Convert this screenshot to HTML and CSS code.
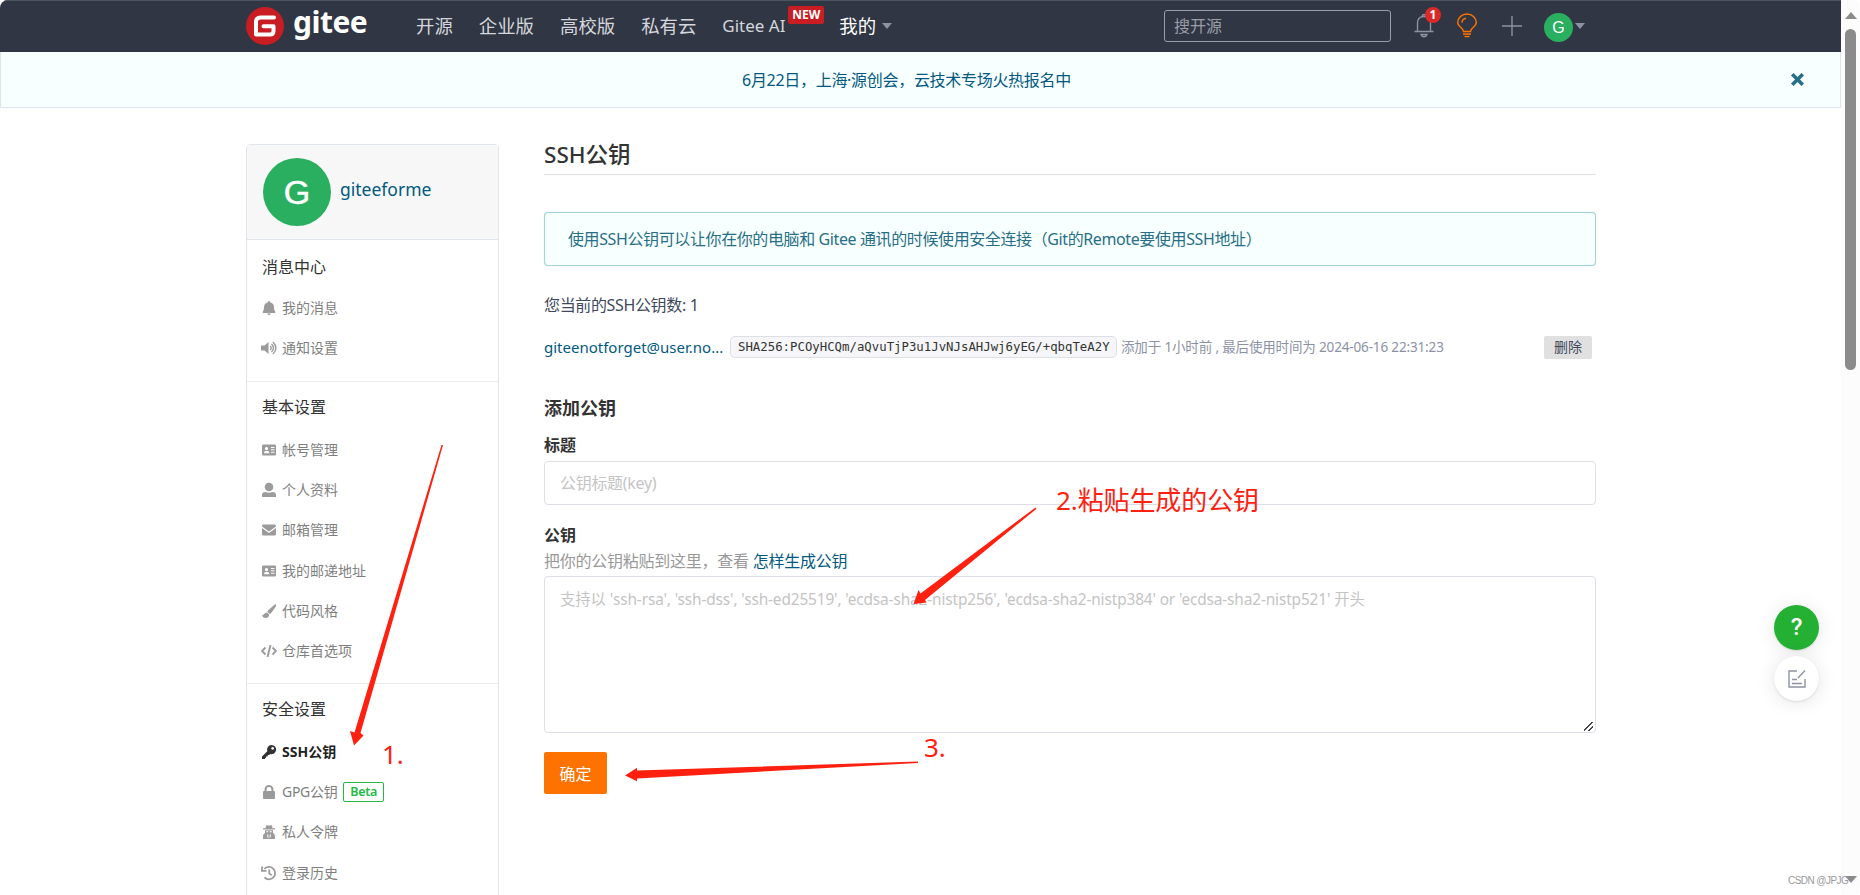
FILE: index.html
```html
<!DOCTYPE html>
<html lang="zh-CN">
<head>
  <meta charset="UTF-8" />
  <title>SSH公钥 - Gitee.com</title>
  <link rel="stylesheet" href="styles.css">
</head>
<body>
  <svg class="sprite" width="0" height="0">
    <symbol id="i-card" viewBox="0 0 16 14"><path fill-rule="evenodd" d="M2.300 1.500h11.400Q15 1.500 15 2.800v8.400Q15 12.500 13.700 12.500H2.300Q1 12.500 1 11.200V2.800Q1 1.500 2.300 1.500zM5.500 4a1.600 1.600 0 1 0 .01 0zM3 10.300h5.400Q8.400 8 6.600 8H4.800Q3 8 3 10.300zM10 4v1h3.500V4zM10 6.300v1h3.500v-1zM10 8.700v1h3.500v-1z"/></symbol>
  </svg>

  <header class="navbar">
    <div class="navbar-inner">
      <a class="logo">
        <svg width="38" height="38" viewBox="0 0 38 38"><circle cx="19" cy="19" r="19" fill="#c71d23"/><path d="M28 10.500H14.500Q10 10.500 10 15v12.500h14Q27.500 27.500 27.500 24v-4.700H17.500" fill="none" stroke="#fff" stroke-width="4" stroke-linejoin="round" stroke-linecap="round"/></svg>
        <span class="logo-text">gitee</span>
      </a>
      <nav class="menu">
        <a>开源</a>
        <a>企业版</a>
        <a>高校版</a>
        <a>私有云</a>
        <a class="menu-ai">Gitee AI<span class="tag-new">NEW</span></a>
        <a class="menu-my">我的<i class="caret"></i></a>
      </nav>
      <div class="tools">
        <input class="search" type="text" placeholder="搜开源">
        <span class="bell">
          <svg width="20" height="25" viewBox="0 0 20 25" fill="none" stroke="#8c92a4" stroke-width="1.400"><path d="M3.500 18V10Q3.500 3.500 10 3.500T16.500 10V18M.5 18.500h19M8.300 3.200a1.700 1.700 0 0 1 3.400 0M7 21.500h6q-.8 2.300-3 2.300T7 21.500z"/></svg>
          <b>1</b>
        </span>
        <svg class="bulb" width="22" height="26" viewBox="0 0 22 26" fill="none" stroke="#fe7300" stroke-width="1.500"><path d="M7.500 18.500C7.500 14.500 1.700 14 1.700 9.800a9.300 8.800 0 0 1 18.600 0C20.300 14 14.500 14.500 14.500 18.500zM7 21h8M8.500 23.500h5M6 9.800q0-3.700 4-4.500"/></svg>
        <svg class="plus" width="20" height="20" viewBox="0 0 20 20" stroke="#8c92a4" stroke-width="1.400"><path d="M0 10h20M10 0v20"/></svg>
        <span class="avatar-mini">G</span>
        <i class="caret"></i>
      </div>
    </div>
  </header>

  <div class="banner">
    <a>6月22日，上海·源创会，云技术专场火热报名中</a>
    <svg class="banner-close" width="13" height="13" viewBox="0 0 13 13"><path d="M2.500 2.500l8 8M10.500 2.500l-8 8" stroke="#276f86" stroke-width="3.600" stroke-linecap="square"/></svg>
  </div>

  <div class="container">
    <aside class="sidebar">
      <div class="user">
        <span class="avatar">G</span>
        <a>giteeforme</a>
      </div>
      <section class="group group-msg">
        <h4>消息中心</h4>
        <a><svg viewBox="0 0 16 16"><path d="M8 1q1 0 1 1.200 4 .8 4 5.300 0 3 1.300 4.300V13H1.700v-1.200Q3 10.500 3 7.500q0-4.500 4-5.300Q7 1 8 1zM6.300 13.500h3.400Q9.500 15 8 15t-1.700-1.500z"/></svg>我的消息</a>
        <a><svg viewBox="0 0 16 16"><path d="M0 5.500h3.500L7.500 2v12l-4-3.500H0z"/><path d="M9.200 6q2 2 0 4M10.500 4q4 4 0 8M12 2q5.800 6 0 12" fill="none" stroke="currentColor" stroke-width="1.400"/></svg>通知设置</a>
      </section>
      <section class="group group-base">
        <h4>基本设置</h4>
        <a><svg viewBox="0 0 16 14"><use href="#i-card"/></svg>帐号管理</a>
        <a><svg viewBox="0 0 16 16"><circle cx="8" cy="5" r="4.300"/><path d="M1 14.500v-1.300Q1 10 4.500 10q3.500 1.500 7 0Q15 10 15 13.200v1.300q0 .5-.5.500h-13q-.5 0-.5-.5z"/></svg>个人资料</a>
        <a><svg viewBox="0 0 16 16"><path d="M1.500 2.500h12Q15 2.500 15 4v.6L8 9.500 1 4.600V4q0-1.500.5-1.500zM1 6l7 5 7-5v6q0 1.500-1.500 1.500h-11Q1 13.500 1 12z"/></svg>邮箱管理</a>
        <a><svg viewBox="0 0 16 14"><use href="#i-card"/></svg>我的邮递地址</a>
        <a><svg viewBox="0 0 16 16"><path d="M14 1.300q1.700 0 1 1.900l-5 7q-1 1-2 .4L6.700 9.300q-.8-.8.200-1.900zM6 9.500l2.200 2Q8 15 4.500 15 1.500 15 1 11.500q1.200 1 2-.3.800-1.700 3-1.700z"/></svg>代码风格</a>
        <a><svg viewBox="0 0 16 16"><path d="M4.500 4.500L1 8l3.500 3.500M11.500 4.500L15 8l-3.500 3.500M9.500 2l-3 12" fill="none" stroke="currentColor" stroke-width="1.900"/></svg>仓库首选项</a>
      </section>
      <section class="group group-safe">
        <h4>安全设置</h4>
        <a class="active"><svg viewBox="0 0 16 16"><path fill-rule="evenodd" d="M10.500 1a4.600 4.600 0 1 1-1.300 9L8 11H6.700v1.600H5V14H4v1H1v-2.500l5.300-5.300A4.600 4.600 0 0 1 10.500 1zM11.600 3a1.400 1.400 0 1 0 .01 0z"/></svg>SSH公钥</a>
        <a class="gpg"><svg viewBox="0 0 16 16"><path fill-rule="evenodd" d="M3.500 7V5.500a4.500 4.500 0 0 1 9 0V7H13q1 0 1 1v6q0 1-1 1H3q-1 0-1-1V8q0-1 1-1zM5.600 7h4.800V5.500a2.400 2.400 0 0 0-4.800 0z"/></svg>GPG公钥<span class="beta">Beta</span></a>
        <a><svg viewBox="0 0 16 16"><path fill-rule="evenodd" d="M5.500 1q2.500 1 5 0l1.200 3.300H14v1.200H2V4.300h2.300zM4 6.300h8Q12 9.300 12.500 9.500 14 10 14 12v3H2v-3q0-2 1.500-2.500.5 0 .5-3.200zM5.300 7.200v1.100h2V7.200zM8.700 7.200v1.100h2V7.200zM6 10.500l.8 3.500h.6l-.2-3.500zM10 10.500L9.200 14h-.6l.2-3.500z"/></svg>私人令牌</a>
        <a><svg viewBox="0 0 16 16"><path d="M3.300 4A6.200 6.200 0 1 1 3.500 12.500M8.300 4.500v4l2.500 1.700M1 1.500v4.300h4.500" fill="none" stroke="currentColor" stroke-width="1.800"/></svg>登录历史</a>
      </section>
    </aside>

    <main class="main">
      <h1>SSH公钥</h1>
      <div class="message">使用SSH公钥可以让你在你的电脑和 Gitee 通讯的时候使用安全连接（Git的Remote要使用SSH地址）</div>
      <p class="count">您当前的SSH公钥数: 1</p>
      <div class="key-row">
        <a class="key-name">giteenotforget@user.no...</a>
        <code>SHA256:PCOyHCQm/aQvuTjP3u1JvNJsAHJwj6yEG/+qbqTeA2Y</code>
        <span class="key-time">添加于 1小时前 , 最后使用时间为 2024-06-16 22:31:23</span>
        <button class="btn-delete">删除</button>
      </div>

      <form class="key-form">
        <h3>添加公钥</h3>
        <label>标题</label>
        <input type="text" placeholder="公钥标题(key)">
        <label class="label-key">公钥</label>
        <p class="help">把你的公钥粘贴到这里，查看 <a>怎样生成公钥</a></p>
        <textarea placeholder="支持以 'ssh-rsa', 'ssh-dss', 'ssh-ed25519', 'ecdsa-sha2-nistp256', 'ecdsa-sha2-nistp384' or 'ecdsa-sha2-nistp521' 开头"></textarea>
        <button type="button" class="btn-submit">确定</button>
      </form>
    </main>
  </div>

  <div class="float-tools">
    <span class="float-btn float-help">?</span>
    <span class="float-btn">
      <svg width="18" height="18" viewBox="0 0 18 18" fill="none" stroke="#8c92a4" stroke-width="1.400"><path d="M9 1H1v16h16V9M17 .5L10 8M4 9.500h5M4 13.500h10"/></svg>
    </span>
  </div>

  <div class="scrollbar">
    <i class="arrow-up"></i>
    <i class="thumb"></i>
    <i class="arrow-down"></i>
  </div>
  <span class="watermark">CSDN @JPJG</span>

  <svg class="arrows" width="1860" height="895" viewBox="0 0 1860 895" fill="#ff2010">
    <path d="M441.500 445h1.500L360.500 733l3 2.500L354 745.500 350 731l4.500 1.500z"/>
    <path d="M1035.500 507.500l1 1.200L925 600l1.500 2.500L913.500 604 918.500 590l2 3.500z"/>
    <path d="M918 761.500v1.500L637 778.500v2.700L625 775.500l12-7.700v2.700z"/>
  </svg>
  <span class="note note-1">1.</span>
  <span class="note note-2">2.粘贴生成的公钥</span>
  <span class="note note-3">3.</span>
</body>
</html>
```
FILE: styles.css
```css
* {
  box-sizing: border-box;
}

body {
  margin: 0;
  height: 895px;
  overflow: hidden;
  position: relative;
  background: #fff;
  border-radius: 8px;
  color: #40485b;
  font-family: "Noto Sans", "Noto Sans CJK SC", sans-serif;
  font-size: 16px;
  line-height: 24px;
}

h1, h3, h4, p {
  margin: 0;
}

a {
  color: #005980;
  text-decoration: none;
}

.sprite {
  position: absolute;
}

input, textarea, button {
  font-family: inherit;
}

.caret {
  border: 5px solid transparent;
  border-top: 6px solid #8c92a4;
  border-bottom: 0;
}

/* header */
.navbar {
  height: 52px;
  width: 1841px;
  background: #303643;
  border-top: 1px solid #4b5260;
}

.navbar-inner {
  width: 1350px;
  height: 49px;
  margin-left: 246px;
  display: flex;
  align-items: center;
}

.logo {
  display: flex;
  align-items: center;
  width: 170px;
  gap: 9px;
}

.logo-text {
  color: #fff;
  font-size: 30px;
  font-weight: 700;
  line-height: 34px;
  margin-top: -8px;
  letter-spacing: -0.5px;
}

.menu {
  display: flex;
  gap: 26px;
  width: 748px;
}

.menu a {
  color: #d5d7dc;
  font-size: 18.400px;
  white-space: nowrap;
}

.menu .menu-ai {
  position: relative;
  width: 91px;
  font-size: 17px;
}

.menu .menu-my {
  display: flex;
  align-items: center;
  gap: 6px;
  color: #fff;
}

.tag-new {
  position: absolute;
  left: 66px;
  top: -8px;
  width: 36px;
  height: 18px;
  border-radius: 2px;
  background: #c71d23;
  color: #fff;
  font-size: 12px;
  font-weight: 700;
  line-height: 18px;
  text-align: center;
}

.tools {
  display: flex;
  align-items: center;
}

.search {
  width: 227px;
  height: 32px;
  padding: 0 9px;
  border: 1px solid #9a9ea8;
  border-radius: 3px;
  background: transparent;
  font-size: 16px;
}

.search::placeholder {
  color: #9a9ea8;
}

.bell {
  position: relative;
  height: 25px;
  margin-left: 23px;
}

.bell b {
  position: absolute;
  left: 11px;
  top: -6px;
  width: 16px;
  height: 16px;
  border-radius: 50%;
  background: #db2828;
  color: #fff;
  font-size: 12px;
  line-height: 16px;
  text-align: center;
}

.bulb {
  margin-left: 22px;
}

.plus {
  margin-left: 24px;
}

.avatar-mini {
  width: 29px;
  height: 29px;
  margin: 3px 2px 0 22px;
  border-radius: 50%;
  background: #2aae5f;
  color: #fff;
  font: 16px/29px "Liberation Sans", sans-serif;
  text-align: center;
}

/* notice */
.banner {
  display: flex;
  align-items: center;
  width: 1841px;
  height: 56px;
  padding-right: 36px;
  background: #f8ffff;
  border: 1px solid #dde5ec;
  border-top: 0;
}

.banner a {
  flex: 1;
  padding-left: 21px;
  text-align: center;
  letter-spacing: -0.3px;
}

.container {
  display: flex;
  gap: 45px;
  margin: 36px 0 0 246px;
}

/* sidebar */
.sidebar {
  width: 253px;
  height: 760px;
  border: 1px solid #e0e6ec;
  border-radius: 4px;
}

.user {
  display: flex;
  align-items: center;
  height: 95px;
  padding: 0 16px 2px;
  gap: 9px;
  background: #f7f7f7;
  border-bottom: 1px solid #e0e6ec;
}

.user a {
  font-size: 17.500px;
  padding-bottom: 4px;
}

.avatar {
  width: 68px;
  height: 68px;
  margin-top: 1px;
  border-radius: 50%;
  background: #2aae5f;
  color: #fff;
  font: 34px/68px "Liberation Sans", sans-serif;
  -webkit-text-stroke: 0.5px #fff;
  text-align: center;
}

.group {
  padding: 13px 14px 0;
  border-bottom: 1px solid #e8eaed;
}

.group-msg {
  height: 142px;
  padding-top: 15px;
}

.group-base {
  height: 302px;
}

.group-safe {
  border: 0;
}

.group h4 {
  height: 43px;
  padding-left: 1px;
  color: #333;
  font-weight: 400;
}

.group-msg h4 {
  height: 41px;
}

.group a {
  display: flex;
  align-items: center;
  height: 24px;
  margin-bottom: 16.200px;
  color: #7f7f7f;
  font-size: 14px;
}

.group a svg {
  width: 16px;
  height: 16px;
  margin-right: 5px;
  fill: currentColor;
  color: #9b9b9b;
}

.group .active {
  color: #222;
  font-weight: 700;
}

.group .active svg {
  color: #333;
}

.group .gpg {
  letter-spacing: -0.3px;
}

.beta {
  height: 20px;
  margin-left: 6px;
  padding: 0 6px;
  border: 1px solid #21ba45;
  border-radius: 2px;
  color: #21ba45;
  font-size: 12.500px;
  font-weight: 600;
  line-height: 18px;
}

/* content */
.main {
  width: 1052px;
}

.main h1 {
  height: 31px;
  border-bottom: 1px solid #dfe1e4;
  color: #333;
  font-size: 22.500px;
  font-weight: 500;
  line-height: 21px;
}

.message {
  height: 54px;
  margin-top: 37px;
  padding-left: 23px;
  border: 1px solid #a3d3dc;
  border-radius: 4px;
  background: #f8ffff;
  box-shadow: 0 0 1px #a9d5de;
  color: #276f86;
  line-height: 52px;
  letter-spacing: -0.39px;
}

.count {
  margin-top: 27px;
  letter-spacing: -0.35px;
}

.key-row {
  display: flex;
  align-items: center;
  margin-top: 18px;
  padding-right: 4px;
}

.key-name {
  width: 186px;
  font-size: 15px;
  white-space: nowrap;
}

.key-row code {
  width: 387px;
  height: 22px;
  padding-left: 7px;
  border: 1px solid #dcdfe6;
  border-radius: 5px;
  background: #f6f6f8;
  color: #333;
  font: 12.350px/20px "DejaVu Sans Mono", monospace;
}

.key-time {
  flex: 1;
  padding-left: 4px;
  color: #8c92a4;
  font-size: 13.500px;
  letter-spacing: -0.15px;
}

.btn-delete {
  width: 48px;
  height: 23px;
  padding: 0;
  border: 0;
  border-radius: 2px;
  background: #e0e0e0;
  color: #40485b;
  font-size: 14px;
  line-height: 22px;
}

.key-form {
  display: flex;
  flex-direction: column;
  align-items: flex-start;
  margin-top: 37px;
}

.key-form h3 {
  color: #333;
  font-size: 18px;
}

.key-form label {
  margin: 13px 0 4px;
  color: #333;
  font-weight: 600;
}

.key-form .label-key {
  margin: 18px 0 2px;
}

.key-form input, .key-form textarea {
  width: 1052px;
  height: 44px;
  padding: 0 15px;
  border: 1px solid #dcdfe6;
  border-radius: 4px;
  font-size: 16px;
  letter-spacing: -0.3px;
}

.key-form textarea {
  height: 157px;
  padding-top: 11px;
  font-size: 15.400px;
  line-height: 24px;
  letter-spacing: -0.13px;
}

.key-form textarea::-webkit-resizer {
  background: linear-gradient(135deg, transparent 5px, #444 5px, #444 6.400px, transparent 6.400px, transparent 8.500px, #444 8.500px, #444 9.900px, transparent 9.900px) 4px 5px / 9px 9px no-repeat;
}

.key-form ::placeholder {
  color: #c4c4c4;
}

.help {
  margin-bottom: 3px;
  color: #999;
  letter-spacing: -0.25px;
}

.btn-submit {
  width: 63px;
  height: 42px;
  margin-top: 19px;
  border: 0;
  border-radius: 2px;
  background: #fe7300;
  color: #fff;
  font-size: 16px;
}

/* floating buttons */
.float-tools {
  position: absolute;
  left: 1774px;
  top: 605px;
  display: flex;
  flex-direction: column;
  gap: 6px;
}

.float-btn {
  display: flex;
  align-items: center;
  justify-content: center;
  width: 45px;
  height: 45px;
  border-radius: 50%;
  background: #fff;
  box-shadow: 0 2px 20px rgba(0, 0, 0, 0.1), 0 1px 2px rgba(0, 0, 0, 0.1);
}

.float-help {
  padding-bottom: 2px;
  background: #24b133;
  color: #fff;
  font: 500 24px/1 Roboto, sans-serif;
}

.scrollbar {
  position: absolute;
  right: 0;
  top: 0;
  display: flex;
  flex-direction: column;
  align-items: center;
  width: 19px;
  height: 895px;
  padding: 12px 0;
  background: #fcfcfc;
}

.arrow-up, .arrow-down {
  border: 6.500px solid transparent;
}

.arrow-up {
  border-top: 0;
  border-bottom: 7px solid #8b8b8b;
}

.arrow-down {
  margin-top: auto;
  border-bottom: 0;
  border-top: 7px solid #8b8b8b;
}

.thumb {
  width: 11px;
  height: 341px;
  margin-top: 10px;
  border-radius: 6px;
  background: #8b8b8b;
}

.watermark {
  position: absolute;
  left: 1788px;
  top: 875px;
  color: #999;
  font: 10px/12px "Liberation Sans", sans-serif;
  letter-spacing: -0.55px;
}

/* annotations */
.arrows {
  position: absolute;
  left: 0;
  top: 0;
}

.note {
  position: absolute;
  color: #ff2010;
  font-size: 26px;
  line-height: 32px;
}

.note-1 {
  left: 382px;
  top: 738px;
}

.note-2 {
  left: 1056px;
  top: 484px;
  letter-spacing: -0.1px;
}

.note-3 {
  left: 924px;
  top: 731px;
}
```
